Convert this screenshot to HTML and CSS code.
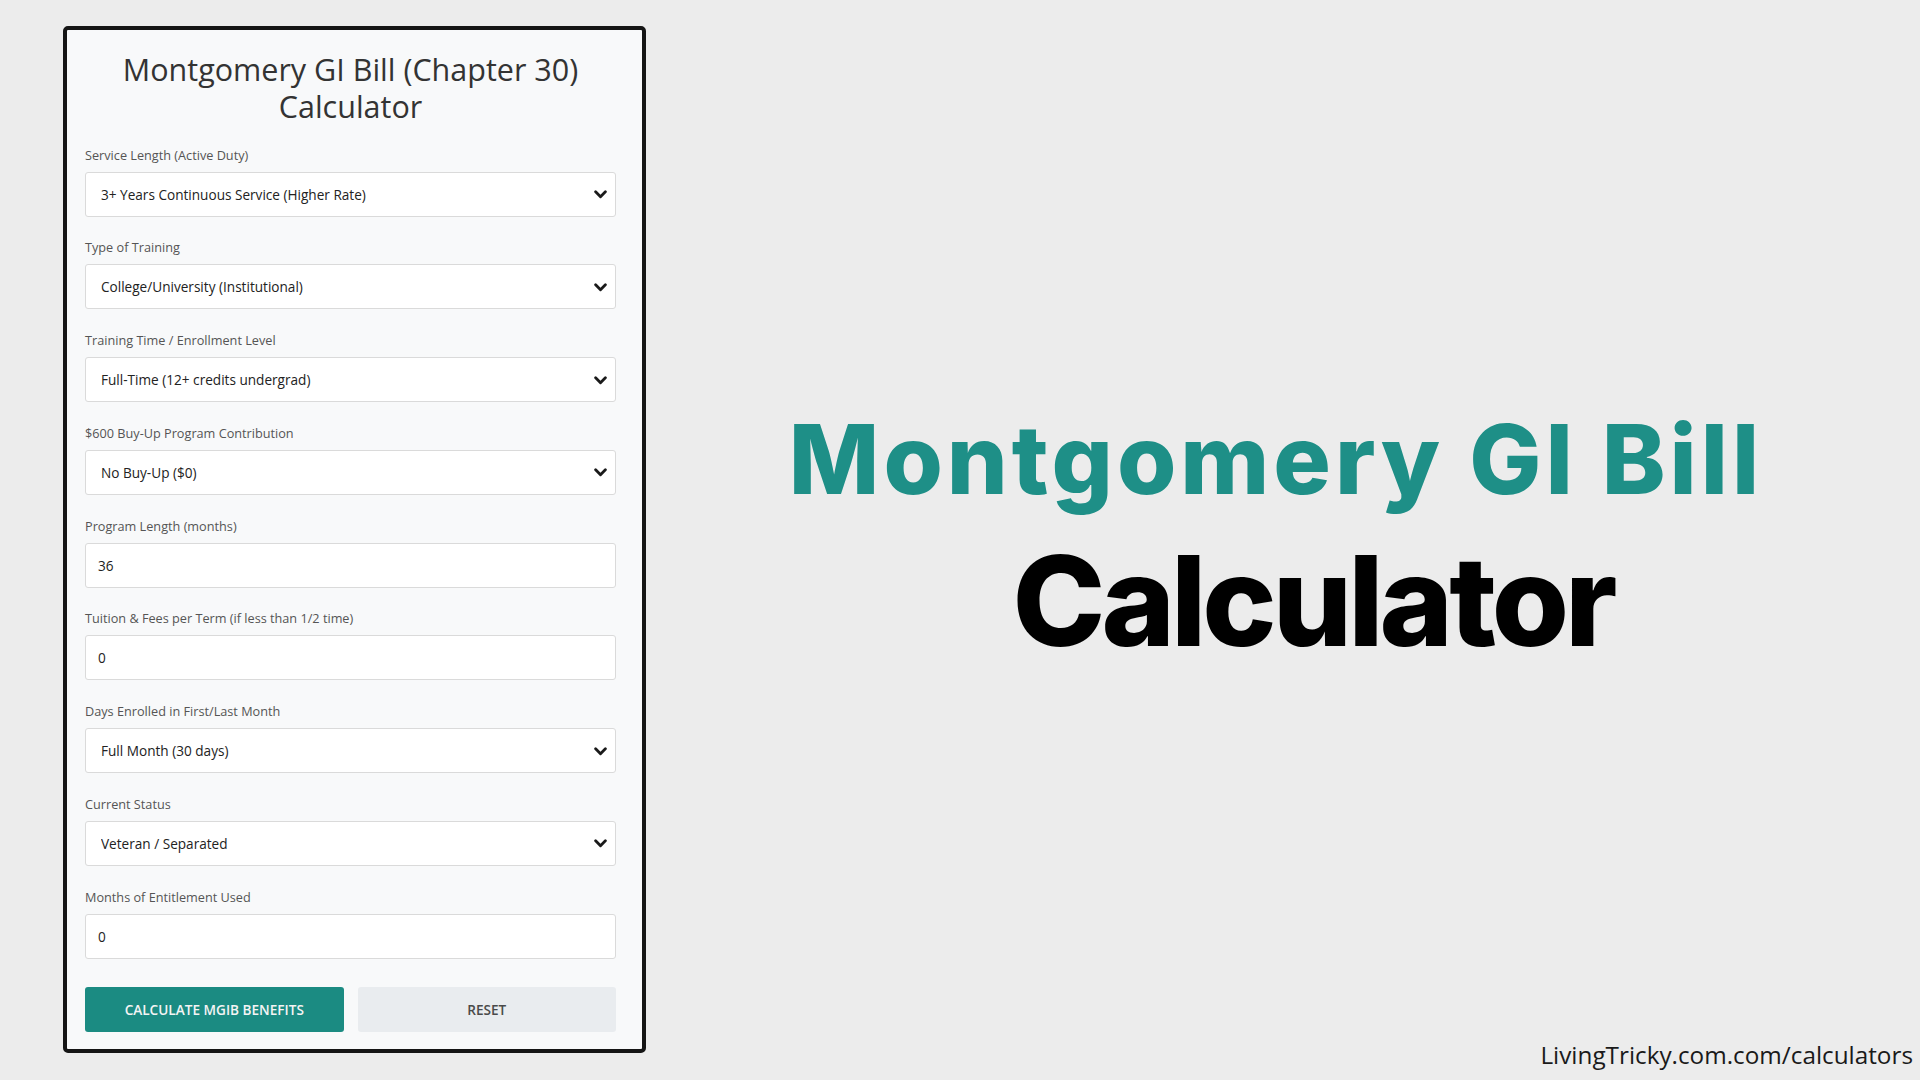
FILE: index.html
```html
<!DOCTYPE html>
<html lang="en">
<head>
<meta charset="utf-8">
<title>Montgomery GI Bill Calculator</title>
<link rel="stylesheet" href="styles.css">
</head>
<body>
<main class="page">
  <section class="card">
    <h1 class="card-title"><span class="title-line">Montgomery GI Bill (Chapter 30)</span><span class="title-line">Calculator</span></h1>
    <form class="form">
      <div class="field">
        <label class="label">Service Length (Active Duty)</label>
        <div class="select-wrap">
          <select class="control select"><option>3+ Years Continuous Service (Higher Rate)</option></select>
          <svg class="chev" viewBox="0 0 12 8"><path d="M1.5 1.5 L6 6 L10.5 1.5" /></svg>
        </div>
      </div>
      <div class="field">
        <label class="label">Type of Training</label>
        <div class="select-wrap">
          <select class="control select"><option>College/University (Institutional)</option></select>
          <svg class="chev" viewBox="0 0 12 8"><path d="M1.5 1.5 L6 6 L10.5 1.5" /></svg>
        </div>
      </div>
      <div class="field">
        <label class="label">Training Time / Enrollment Level</label>
        <div class="select-wrap">
          <select class="control select"><option>Full-Time (12+ credits undergrad)</option></select>
          <svg class="chev" viewBox="0 0 12 8"><path d="M1.5 1.5 L6 6 L10.5 1.5" /></svg>
        </div>
      </div>
      <div class="field">
        <label class="label">$600 Buy-Up Program Contribution</label>
        <div class="select-wrap">
          <select class="control select"><option>No Buy-Up ($0)</option></select>
          <svg class="chev" viewBox="0 0 12 8"><path d="M1.5 1.5 L6 6 L10.5 1.5" /></svg>
        </div>
      </div>
      <div class="field">
        <label class="label">Program Length (months)</label>
        <input class="control input" type="text" value="36">
      </div>
      <div class="field">
        <label class="label">Tuition &amp; Fees per Term (if less than 1/2 time)</label>
        <input class="control input" type="text" value="0">
      </div>
      <div class="field">
        <label class="label">Days Enrolled in First/Last Month</label>
        <div class="select-wrap">
          <select class="control select"><option>Full Month (30 days)</option></select>
          <svg class="chev" viewBox="0 0 12 8"><path d="M1.5 1.5 L6 6 L10.5 1.5" /></svg>
        </div>
      </div>
      <div class="field">
        <label class="label">Current Status</label>
        <div class="select-wrap">
          <select class="control select"><option>Veteran / Separated</option></select>
          <svg class="chev" viewBox="0 0 12 8"><path d="M1.5 1.5 L6 6 L10.5 1.5" /></svg>
        </div>
      </div>
      <div class="field">
        <label class="label">Months of Entitlement Used</label>
        <input class="control input" type="text" value="0">
      </div>
      <div class="actions">
        <button type="button" class="btn btn-primary">CALCULATE MGIB BENEFITS</button>
        <button type="button" class="btn btn-secondary">RESET</button>
      </div>
    </form>
  </section>
  <section class="hero">
    <div class="hero-center">
      <div class="hero-block">
        <div class="hero-line1">Montgomery GI Bill</div>
        <div class="hero-line2">Calculator</div>
      </div>
    </div>
    <div class="footer">LivingTricky.com.com/calculators</div>
  </section>
</main>
</body>
</html>
```

FILE: styles.css
```css
* { box-sizing: border-box; }

html, body {
  margin: 0;
  padding: 0;
}

body {
  background: #ececec;
  font-family: "Open Sans", "Noto Sans", sans-serif;
  width: 1920px;
  height: 1080px;
  overflow: hidden;
}

.page {
  display: flex;
  height: 1080px;
}

.card {
  flex: 0 0 583px;
  width: 583px;
  height: 1027px;
  margin: 26px 0 0 63px;
  padding: 21px 26px 0 18px;
  background: #f8f9fa;
  border: 4px solid #151515;
  border-radius: 5px;
}

.card-title {
  margin: 0;
  font-size: 30.5px;
  line-height: 37px;
  font-weight: 500;
  color: #333333;
  text-align: center;
  display: flex;
  flex-direction: column;
  align-items: center;
}

.title-line {
  display: block;
  height: 37px;
  line-height: 37px;
}

.form {
  margin-top: 21.6px;
  display: flex;
  flex-direction: column;
}

.field {
  display: flex;
  flex-direction: column;
  margin-bottom: 22.75px;
}

.label {
  font-size: 12.7px;
  line-height: 16px;
  color: #555555;
  margin-bottom: 9px;
}

.select-wrap {
  position: relative;
}

.control {
  display: block;
  width: 100%;
  height: 45px;
  margin: 0;
  background: #ffffff;
  border: 1px solid #dadada;
  border-radius: 3px;
  font-family: "Open Sans", "Noto Sans", sans-serif;
  font-size: 13.6px;
  color: #222222;
  outline: none;
}

.select {
  appearance: none;
  -webkit-appearance: none;
  padding: 0 34px 0 15px;
}

.input {
  padding: 0 12px;
}

.chev {
  position: absolute;
  right: 9px;
  top: 50%;
  width: 13px;
  height: 9px;
  margin-top: -4px;
  pointer-events: none;
}

.chev path {
  fill: none;
  stroke: #1a1a1a;
  stroke-width: 2.6;
  stroke-linecap: round;
  stroke-linejoin: round;
}

.actions {
  display: flex;
  gap: 14px;
  padding-top: 5.25px;
}

.btn {
  flex: 1 1 0;
  height: 45px;
  border: none;
  border-radius: 3px;
  font-family: "Open Sans", "Noto Sans", sans-serif;
  font-size: 13.6px;
  font-weight: 600;
  letter-spacing: 0;
}

.btn-primary {
  background: #1b8b82;
  color: #f4f4f4;
}

.btn-secondary {
  background: #e9ecef;
  color: #4a4a4a;
}

.hero {
  flex: 1 1 auto;
  display: flex;
  flex-direction: column;
  height: 1080px;
}

.hero-center {
  flex: 1 1 auto;
  display: flex;
  align-items: center;
  justify-content: center;
  padding-top: 30px;
  padding-right: 14px;
}

.hero-block {
  display: flex;
  flex-direction: column;
  align-items: center;
}

.hero-line1 {
  font-family: "Inter", sans-serif;
  font-weight: 800;
  font-size: 96px;
  line-height: 96px;
  color: #1e8f87;
  letter-spacing: 4px;
  white-space: nowrap;
}

.hero-line2 {
  font-family: "Inter", sans-serif;
  font-weight: 800;
  font-size: 125px;
  line-height: 125px;
  margin-top: 31px;
  margin-left: 74px;
  color: #000000;
  letter-spacing: -4px;
  white-space: nowrap;
}

.footer {
  align-self: flex-end;
  font-family: "Open Sans", "Noto Sans", sans-serif;
  font-size: 24.3px;
  line-height: 24px;
  color: #1a1a1a;
  margin: 0 7px 13px 0;
  white-space: nowrap;
}
```
